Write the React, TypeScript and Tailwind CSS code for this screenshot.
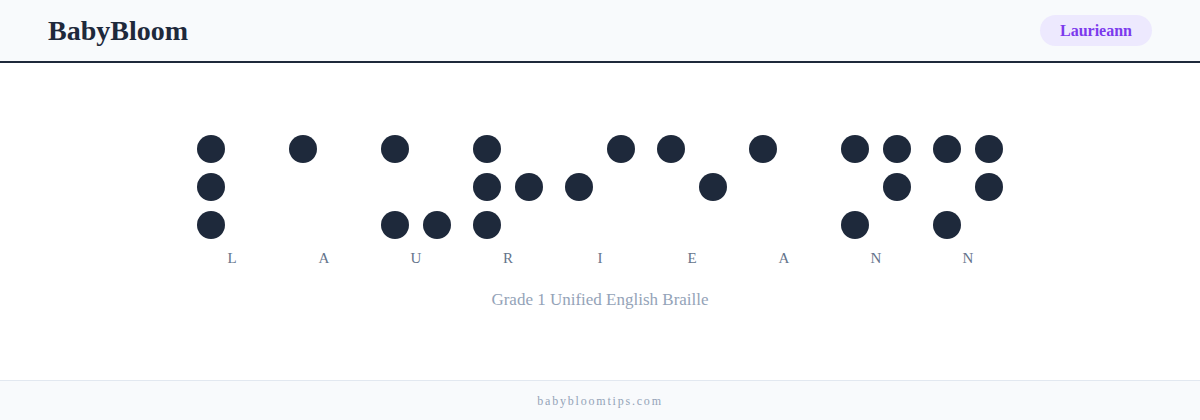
import React from "react";

const serif = { fontFamily: '"Liberation Serif", "DejaVu Serif", serif' };

// braille dots per letter, numbered 1-6 (1,2,3 left column; 4,5,6 right column)
const cells: { letter: string; dots: number[] }[] = [
  { letter: "L", dots: [1, 2, 3] },
  { letter: "A", dots: [1] },
  { letter: "U", dots: [1, 3, 6] },
  { letter: "R", dots: [1, 2, 3, 5] },
  { letter: "I", dots: [2, 4] },
  { letter: "E", dots: [1, 5] },
  { letter: "A", dots: [1] },
  { letter: "N", dots: [1, 3, 4, 5] },
  { letter: "N", dots: [1, 3, 4, 5] },
];

// grid order: row by row, left then right
const order = [1, 4, 2, 5, 3, 6];

function BrailleCell({ letter, dots }: { letter: string; dots: number[] }) {
  return (
    <div className="flex flex-col items-center">
      <div className="grid grid-cols-2 gap-x-[14px] gap-y-[10px]">
        {order.map((n) => (
          <div
            key={n}
            className={
              dots.includes(n)
                ? "w-7 h-7 rounded-full bg-[#1e293b]"
                : "w-7 h-7 rounded-full bg-transparent"
            }
          />
        ))}
      </div>
      <span className="mt-[9px] text-[15px] leading-5 font-medium text-[#64748b]">
        {letter}
      </span>
    </div>
  );
}

export default function App() {
  return (
    <div className="h-[420px] w-full flex flex-col bg-white" style={serif}>
      <header className="h-[63px] shrink-0 flex items-center justify-between px-12 bg-[#f8fafc] border-b-2 border-[#1e293b]">
        <h1 className="text-[28px] font-bold text-[#1e293b] leading-none">BabyBloom</h1>
        <span className="h-[31px] px-5 flex items-center rounded-full bg-[#ede9fe] text-[#7c3aed] text-[16px] font-semibold">
          Laurieann
        </span>
      </header>

      <main className="flex-1 flex flex-col items-center justify-center pt-1">
        <div className="flex gap-[22px]">
          {cells.map((c, i) => (
            <BrailleCell key={i} letter={c.letter} dots={c.dots} />
          ))}
        </div>
        <p className="mt-5 text-[17px] leading-6 text-[#94a3b8]">
          Grade 1 Unified English Braille
        </p>
      </main>

      <footer className="h-10 shrink-0 flex items-center justify-center bg-[#f8fafc] border-t border-[#e2e8f0]">
        <span className="text-[12px] tracking-[0.15em] text-[#94a3b8]">babybloomtips.com</span>
      </footer>
    </div>
  );
}
